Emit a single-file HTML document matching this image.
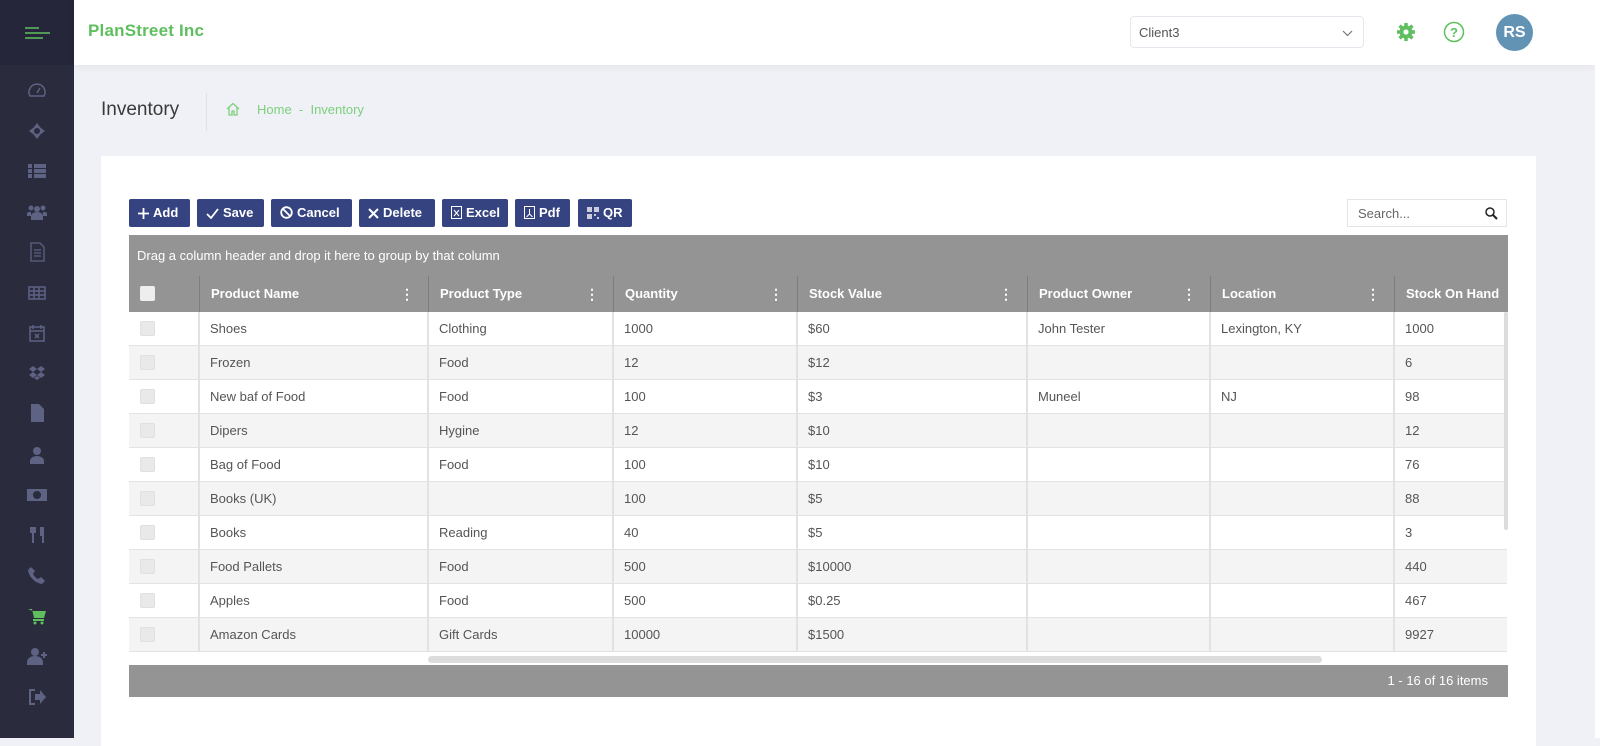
<!DOCTYPE html>
<html><head><meta charset="utf-8"><style>
*{box-sizing:border-box;margin:0;padding:0}
body{width:1600px;height:738px;overflow:hidden;background:#f0f1f6;font-family:"Liberation Sans",sans-serif;position:relative}
.sb{position:absolute;left:0;top:0;width:74px;height:738px;background:#2a2b3c}
.sbt{position:absolute;left:0;top:0;width:74px;height:65px;background:#25263a}
.ic{position:absolute;left:27px;width:20px;height:20px;color:#5e6283}
.top{position:absolute;left:74px;top:0;width:1521px;height:65px;background:#fff;box-shadow:0 2px 8px rgba(0,0,0,.06)}
.brand{position:absolute;left:14px;top:21px;color:#5fbf5f;font-size:17px;font-weight:bold;letter-spacing:.2px}
.sel{position:absolute;left:1056px;top:16px;width:234px;height:32px;border:1px solid #e6e7ee;border-radius:4px;font-size:13px;color:#555;padding:8px 8px}
.av{position:absolute;left:1422px;top:14px;width:37px;height:37px;border-radius:50%;background:#6393b4;color:#fff;font-weight:bold;font-size:16px;text-align:center;line-height:37px}
.ttl{position:absolute;left:101px;top:99px;font-size:19px;color:#3a3a3a}
.vs{position:absolute;left:206px;top:93px;width:1px;height:38px;background:#dfe0e6}
.bc{position:absolute;left:257px;top:102px;font-size:13px;color:#7ccf7c}
.card{position:absolute;left:101px;top:156px;width:1435px;height:590px;background:#fff}
.btn{position:absolute;top:199px;height:28px;background:#354480;color:#fff;font-size:13px;border-radius:2px;line-height:28px;padding-left:9px;font-weight:bold;white-space:nowrap}
.btn svg{vertical-align:-2px;margin-right:4px}
.srch{position:absolute;left:1347px;top:199px;width:160px;height:28px;border:1px solid #e4e4e4;font-size:13px;color:#666;padding:6px 10px}
.grp{position:absolute;left:129px;top:235px;width:1379px;height:41px;background:#949494;color:#fff;font-size:13px;padding:13px 8px}
.hdr{position:absolute;left:129px;top:276px;width:1379px;height:36px;background:#949494}
.h{position:absolute;top:0;height:36px;color:#fff;font-weight:bold;font-size:13px;line-height:36px;padding-left:11px;border-left:1px solid #7d7d7d}
.dots{position:absolute;right:14px;top:0;font-size:14px}
.row{position:absolute;left:129px;width:1378px;height:34px;border-bottom:1px solid #e3e3e3;font-size:13px;color:#555}
.row.a{background:#f4f4f4}
.c{position:absolute;top:0;height:34px;line-height:34px;padding-left:11px}
.vl{position:absolute;top:312px;width:2px;height:345px;background:#e2e2e2}
.cb{position:absolute;left:11px;top:9px;width:15px;height:15px;background:#e9e9e9;border:1px solid #e0e0e0;border-radius:2px}
.pg{position:absolute;left:129px;top:665px;width:1379px;height:32px;background:#949494;color:#fff;font-size:13px;text-align:right;padding:8px 20px}
</style></head><body>
<div class="sb"><div class="sbt"></div>
<svg style="position:absolute;left:24px;top:26px" width="26" height="14"><path d="M1 2h14M1 7h25M1 12h18" stroke="#5fbf5f" stroke-width="1.5"/></svg>
<svg class="ic" style="top:81px" viewBox="0 0 20 20"><path d="M3 15a8 8 0 1 1 14 0z" fill="none" stroke="currentColor" stroke-width="1.5"/><path d="M10 12l3-5" stroke="currentColor" stroke-width="1.5"/></svg>
<svg class="ic" style="top:121px" viewBox="0 0 20 20"><path d="M10 2l3 4h-6zM10 18l3-4h-6zM2 10l4-3v6zM18 10l-4-3v6z" fill="currentColor"/><circle cx="10" cy="10" r="4" fill="none" stroke="currentColor" stroke-width="2"/></svg>
<svg class="ic" style="top:161px" viewBox="0 0 20 20"><path d="M1 3h4v4H1zM7 3h12v4H7zM1 8h4v4H1zM7 8h12v4H7zM1 13h4v4H1zM7 13h12v4H7z" fill="currentColor"/></svg>
<svg class="ic" style="top:202px" viewBox="0 0 20 20"><circle cx="10" cy="7" r="3" fill="currentColor"/><circle cx="4" cy="6" r="2.5" fill="currentColor"/><circle cx="16" cy="6" r="2.5" fill="currentColor"/><path d="M4 18v-4a6 4 0 0 1 12 0v4zM0 14v-3a4 3 0 0 1 4-1v4zM20 14v-3a4 3 0 0 0-4-1v4z" fill="currentColor"/></svg>
<svg class="ic" style="top:242px" viewBox="0 0 20 20"><path d="M4 1h9l4 4v14H4z M7 8h7M7 11h7M7 14h7" fill="none" stroke="currentColor" stroke-width="1.3"/></svg>
<svg class="ic" style="top:283px" viewBox="0 0 20 20"><path d="M2 4h16v12H2zM2 8h16M2 12h16M7 4v12M12 4v12" fill="none" stroke="currentColor" stroke-width="1.5"/></svg>
<svg class="ic" style="top:323px" viewBox="0 0 20 20"><path d="M3 4h14v14H3zM3 8h14M6 2v4M14 2v4M8 11l4 4M12 11l-4 4" fill="none" stroke="currentColor" stroke-width="1.5"/></svg>
<svg class="ic" style="top:363px" viewBox="0 0 20 20"><path d="M6 3l4 3-4 3-4-3zM14 3l4 3-4 3-4-3zM6 9l4 3-4 3-4-3zM14 9l4 3-4 3-4-3zM10 13l3 2-3 2-3-2z" fill="currentColor"/></svg>
<svg class="ic" style="top:403px" viewBox="0 0 20 20"><path d="M4 1h8l5 5v13H4z" fill="currentColor"/></svg>
<svg class="ic" style="top:445px" viewBox="0 0 20 20"><circle cx="10" cy="6" r="4" fill="currentColor"/><path d="M3 19v-3a7 5 0 0 1 14 0v3z" fill="currentColor"/></svg>
<svg class="ic" style="top:485px" viewBox="0 0 20 20"><rect x="0" y="4" width="20" height="12" fill="currentColor"/><ellipse cx="10" cy="10" rx="4" ry="4" fill="#2a2b3c"/></svg>
<svg class="ic" style="top:525px" viewBox="0 0 20 20"><path d="M3 2v6h2v10h2V8h2V2zM13 2h4v16h-2v-7h-2z" fill="currentColor"/></svg>
<svg class="ic" style="top:565px" viewBox="0 0 20 20"><path d="M4 2l4 4-2 3c1 2 3 4 5 5l3-2 4 4-3 3C8 18 2 12 1 5z" fill="currentColor"/></svg>
<svg class="ic" style="top:606px;color:#5fbf5f" viewBox="0 0 20 20"><path d="M1 3h4l2 9h10l2-7H6" fill="currentColor"/><rect x="6" y="13" width="11" height="2" fill="currentColor"/><circle cx="8" cy="17" r="1.5" fill="currentColor"/><circle cx="15" cy="17" r="1.5" fill="currentColor"/></svg>
<svg class="ic" style="top:646px" viewBox="0 0 20 20"><circle cx="8" cy="6" r="4" fill="currentColor"/><path d="M1 18v-2a7 5 0 0 1 14 0v2zM14 9h6M17 6v6" fill="currentColor" stroke="currentColor" stroke-width="2"/></svg>
<svg class="ic" style="top:687px" viewBox="0 0 20 20"><path d="M8 3H3v14h5" fill="none" stroke="currentColor" stroke-width="2"/><path d="M8 7h5V3l6 7-6 7v-4H8z" fill="currentColor"/></svg>
</div>
<div class="top"><div class="brand">PlanStreet Inc</div>
<div class="sel">Client3<svg style="position:absolute;right:10px;top:13px" width="11" height="7"><path d="M1 1l4.5 4.5L10 1" fill="none" stroke="#777" stroke-width="1.2"/></svg></div>
<svg style="position:absolute;left:1322px;top:22px" width="20" height="20" viewBox="0 0 20 20"><circle cx="10" cy="10" r="6.5" fill="#5fbf5f"/><g stroke="#5fbf5f" stroke-width="3.5"><path d="M10 1v18M1 10h18M3.6 3.6l12.8 12.8M16.4 3.6L3.6 16.4"/></g><circle cx="10" cy="10" r="2.6" fill="#fff"/></svg>
<svg style="position:absolute;left:1369px;top:21px" width="22" height="22" viewBox="0 0 22 22"><circle cx="11" cy="11" r="9.5" fill="none" stroke="#5fbf5f" stroke-width="1.5"/><text x="11" y="16" text-anchor="middle" fill="#5fbf5f" font-size="13" font-family="Liberation Sans" font-weight="bold">?</text></svg>
<div class="av">RS</div></div>
<div style="position:absolute;left:1595px;top:0;width:5px;height:738px;background:#fff"></div>
<div class="ttl">Inventory</div><div class="vs"></div>
<svg style="position:absolute;left:226px;top:102px" width="14" height="14" viewBox="0 0 14 14"><path d="M1 7l6-5.5L13 7M3 5.5V13h3V9h2v4h3V5.5" fill="none" stroke="#7ccf7c" stroke-width="1.3"/></svg>
<div class="bc">Home&nbsp; - &nbsp;Inventory</div>
<div class="card"></div>
<div class="btn" style="left:129px;width:61px"><svg width="11" height="11"><path d="M5.5 0v11M0 5.5h11" stroke="#fff" stroke-width="1.8"/></svg>Add</div>
<div class="btn" style="left:197px;width:67px"><svg width="13" height="11"><path d="M1 6l4 4 7-9" fill="none" stroke="#fff" stroke-width="1.8"/></svg>Save</div>
<div class="btn" style="left:271px;width:81px"><svg width="13" height="13"><circle cx="6.5" cy="6.5" r="5.3" fill="none" stroke="#fff" stroke-width="1.8"/><path d="M2.8 2.8l7.4 7.4" stroke="#fff" stroke-width="1.8"/></svg>Cancel</div>
<div class="btn" style="left:359px;width:76px"><svg width="11" height="11"><path d="M1 1l9 9M10 1l-9 9" stroke="#fff" stroke-width="2"/></svg>Delete</div>
<div class="btn" style="left:442px;width:66px"><svg width="11" height="13"><path d="M.5 .5h10v12H.5z" fill="none" stroke="#fff"/><path d="M3 4l5 6M8 4l-5 6" stroke="#fff"/></svg>Excel</div>
<div class="btn" style="left:515px;width:55px"><svg width="11" height="13"><path d="M.5 .5h10v12H.5z" fill="none" stroke="#fff"/><path d="M5.5 3v5l-3 3M5.5 8l3 3" fill="none" stroke="#fff"/></svg>Pdf</div>
<div class="btn" style="left:578px;width:54px"><svg width="12" height="12"><path d="M0 0h5v5H0zM7 0h5v5H7zM0 7h5v5H0zM7 7h2v2H7zM10 10h2v2h-2z" fill="#ccd"/></svg>QR</div>
<div class="srch">Search...<svg style="position:absolute;right:8px;top:7px" width="13" height="13"><circle cx="5" cy="5" r="4" fill="none" stroke="#222" stroke-width="1.5"/><path d="M8 8l4 4" stroke="#222" stroke-width="2"/></svg></div>
<div class="grp">Drag a column header and drop it here to group by that column</div>
<div class="hdr">
<div style="position:absolute;left:11px;top:10px;width:15px;height:15px;background:#eee;border-radius:2px"></div>
<div class="h" style="left:70px;width:229px">Product Name<span class="dots">⋮</span></div>
<div class="h" style="left:299px;width:185px">Product Type<span class="dots">⋮</span></div>
<div class="h" style="left:484px;width:184px">Quantity<span class="dots">⋮</span></div>
<div class="h" style="left:668px;width:230px">Stock Value<span class="dots">⋮</span></div>
<div class="h" style="left:898px;width:183px">Product Owner<span class="dots">⋮</span></div>
<div class="h" style="left:1081px;width:184px">Location<span class="dots">⋮</span></div>
<div class="h" style="left:1265px;width:114px">Stock On Hand</div>
</div>
<div class="row" style="top:312px"><div class="cb"></div><div class="c" style="left:70px">Shoes</div><div class="c" style="left:299px">Clothing</div><div class="c" style="left:484px">1000</div><div class="c" style="left:668px">$60</div><div class="c" style="left:898px">John Tester</div><div class="c" style="left:1081px">Lexington, KY</div><div class="c" style="left:1265px">1000</div></div>
<div class="row a" style="top:346px"><div class="cb"></div><div class="c" style="left:70px">Frozen</div><div class="c" style="left:299px">Food</div><div class="c" style="left:484px">12</div><div class="c" style="left:668px">$12</div><div class="c" style="left:1265px">6</div></div>
<div class="row" style="top:380px"><div class="cb"></div><div class="c" style="left:70px">New baf of Food</div><div class="c" style="left:299px">Food</div><div class="c" style="left:484px">100</div><div class="c" style="left:668px">$3</div><div class="c" style="left:898px">Muneel</div><div class="c" style="left:1081px">NJ</div><div class="c" style="left:1265px">98</div></div>
<div class="row a" style="top:414px"><div class="cb"></div><div class="c" style="left:70px">Dipers</div><div class="c" style="left:299px">Hygine</div><div class="c" style="left:484px">12</div><div class="c" style="left:668px">$10</div><div class="c" style="left:1265px">12</div></div>
<div class="row" style="top:448px"><div class="cb"></div><div class="c" style="left:70px">Bag of Food</div><div class="c" style="left:299px">Food</div><div class="c" style="left:484px">100</div><div class="c" style="left:668px">$10</div><div class="c" style="left:1265px">76</div></div>
<div class="row a" style="top:482px"><div class="cb"></div><div class="c" style="left:70px">Books (UK)</div><div class="c" style="left:484px">100</div><div class="c" style="left:668px">$5</div><div class="c" style="left:1265px">88</div></div>
<div class="row" style="top:516px"><div class="cb"></div><div class="c" style="left:70px">Books</div><div class="c" style="left:299px">Reading</div><div class="c" style="left:484px">40</div><div class="c" style="left:668px">$5</div><div class="c" style="left:1265px">3</div></div>
<div class="row a" style="top:550px"><div class="cb"></div><div class="c" style="left:70px">Food Pallets</div><div class="c" style="left:299px">Food</div><div class="c" style="left:484px">500</div><div class="c" style="left:668px">$10000</div><div class="c" style="left:1265px">440</div></div>
<div class="row" style="top:584px"><div class="cb"></div><div class="c" style="left:70px">Apples</div><div class="c" style="left:299px">Food</div><div class="c" style="left:484px">500</div><div class="c" style="left:668px">$0.25</div><div class="c" style="left:1265px">467</div></div>
<div class="row a" style="top:618px"><div class="cb"></div><div class="c" style="left:70px">Amazon Cards</div><div class="c" style="left:299px">Gift Cards</div><div class="c" style="left:484px">10000</div><div class="c" style="left:668px">$1500</div><div class="c" style="left:1265px">9927</div></div>
<div class="vl" style="left:198px"></div><div class="vl" style="left:427px"></div><div class="vl" style="left:612px"></div><div class="vl" style="left:796px"></div><div class="vl" style="left:1026px"></div><div class="vl" style="left:1209px"></div><div class="vl" style="left:1393px"></div>
<div style="position:absolute;left:129px;top:652px;width:1379px;height:13px;background:#fff"></div>
<div style="position:absolute;left:428px;top:656px;width:894px;height:7px;border-radius:4px;background:#dcdcdc"></div>
<div style="position:absolute;left:1504px;top:312px;width:4px;height:218px;border-radius:2px;background:#dcdcdc"></div>
<div class="pg">1 - 16 of 16 items</div>
</body></html>
